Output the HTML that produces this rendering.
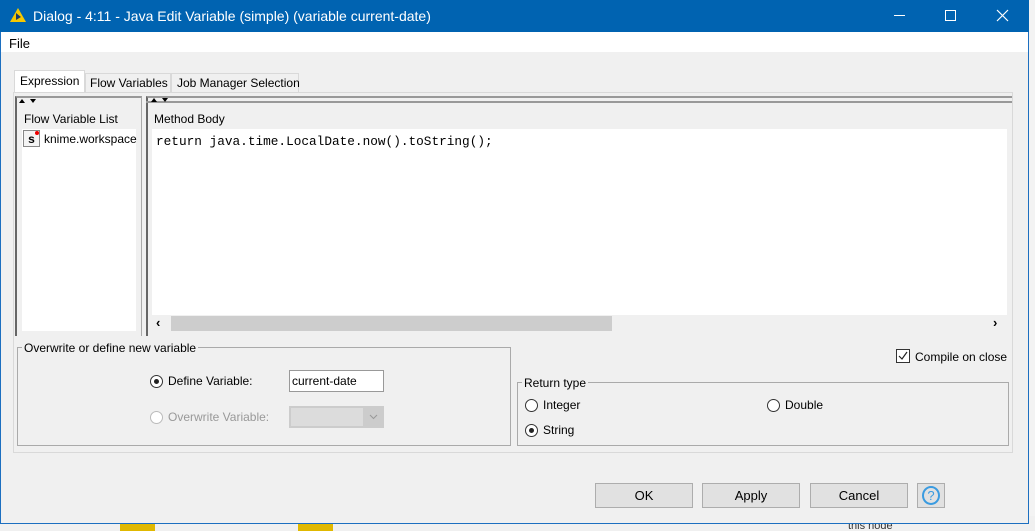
<!DOCTYPE html>
<html><head><style>
*{box-sizing:border-box;margin:0;padding:0}
body{width:1035px;height:531px;overflow:hidden;background:#fff;font-family:"Liberation Sans",sans-serif;font-size:12px;color:#000;position:relative}
.a{position:absolute}
.win{left:0;top:0;width:1029px;height:524px;border:1px solid #1c6fc0;background:#f0f0f0}
.title{left:0;top:0;width:1029px;height:32px;background:#0063b1;color:#fff;font-size:14px}
.btn{background:#e1e1e1;border:1px solid #adadad;text-align:center;line-height:23px;font-size:13px}
.rad{width:13px;height:13px;border:1px solid #333;border-radius:50%;background:#fff}
.dot{left:3px;top:3px;width:5px;height:5px;border-radius:50%;background:#222}
</style></head><body>
<div class="a" style="left:1028px;top:0;width:7px;height:531px;background:#f3f3f3"></div>
<div class="a" style="left:0;top:516px;width:1035px;height:15px;background:#f0f0f0"></div>
<div class="a" style="left:120px;top:523px;width:35px;height:8px;background:#e0b800"></div>
<div class="a" style="left:298px;top:523px;width:35px;height:8px;background:#e0b800"></div>
<div class="a" style="left:848px;top:520px;font-size:11px;color:#333">this node</div>
<div class="a win"></div>
<div class="a title">
 <svg class="a" style="left:9px;top:7px" width="18" height="16"><polygon points="9,1 17,15 1,15" fill="#f6c800"/><polygon points="7,6 12,10 7,13" fill="#1a3a6a"/></svg>
 <div class="a" style="left:33px;top:8px">Dialog - 4:11 - Java Edit Variable (simple) (variable current-date)</div>
 <div class="a" style="left:894px;top:15px;width:11px;height:1px;background:#fff"></div>
 <div class="a" style="left:945px;top:10px;width:11px;height:11px;border:1px solid #fff"></div>
 <svg class="a" style="left:996px;top:9px" width="13" height="13"><path d="M1 1L12 12M12 1L1 12" stroke="#fff" stroke-width="1.2"/></svg>
</div>
<div class="a" style="left:1px;top:32px;width:1027px;height:20px;background:#fff"></div>
<div class="a" style="left:9px;top:36px;font-size:13px">File</div>
<!-- tabs -->
<div class="a" style="left:14px;top:70px;width:71px;height:23px;background:#fff;border:1px solid #d9d9d9;border-bottom:none"></div>
<div class="a" style="left:20px;top:74px">Expression</div>
<div class="a" style="left:85px;top:73px;width:86px;height:20px;border:1px solid #d9d9d9;background:#f0f0f0"></div>
<div class="a" style="left:90px;top:76px">Flow Variables</div>
<div class="a" style="left:171px;top:73px;width:128px;height:20px;border:1px solid #d9d9d9;background:#f0f0f0"></div>
<div class="a" style="left:177px;top:76px">Job Manager Selection</div>
<div class="a" style="left:13px;top:92px;width:1000px;height:361px;border:1px solid #d9d9d9;background:#f0f0f0"></div>
<!-- left panel -->
<div class="a" style="left:15px;top:96px;width:127px;height:240px;border-left:2px solid #666;border-top:2px solid #999;border-right:1px solid #aaa"></div>
<svg class="a" style="left:18px;top:98px" width="24" height="6"><polygon points="1,5 4,1 7,5" fill="#000"/><polygon points="12,1 18,1 15,5" fill="#000"/></svg>
<div class="a" style="left:22px;top:129px;width:114px;height:202px;background:#fff"></div>
<div class="a" style="left:24px;top:112px">Flow Variable List</div>
<div class="a" style="left:23px;top:130px;width:17px;height:17px;border:1px solid #888;background:#f4f4f4;font-weight:bold;font-size:12px;text-align:center;line-height:16px">s</div>
<div class="a" style="left:35px;top:131px;width:4px;height:4px;border-radius:50%;background:#e00"></div>
<div class="a" style="left:44px;top:132px">knime.workspace</div>
<!-- right panel -->
<div class="a" style="left:146px;top:96px;width:866px;height:240px;border-left:2px solid #666;border-top:2px solid #999"></div>
<div class="a" style="left:146px;top:101px;width:866px;height:2px;background:#999"></div>
<svg class="a" style="left:150px;top:97px" width="24" height="6"><polygon points="1,5 4,1 7,5" fill="#000"/><polygon points="12,1 18,1 15,5" fill="#000"/></svg>
<div class="a" style="left:154px;top:112px">Method Body</div>
<div class="a" style="left:152px;top:129px;width:855px;height:203px;background:#fff"></div>
<div class="a" style="left:156px;top:134px;font-family:'Liberation Mono',monospace;font-size:12.75px">return java.time.LocalDate.now().toString();</div>
<div class="a" style="left:152px;top:315px;width:855px;height:17px;background:#f0f0f0"></div>
<div class="a" style="left:171px;top:316px;width:441px;height:15px;background:#cdcdcd"></div>
<div class="a" style="left:156px;top:315px;font-size:13px;font-weight:bold">‹</div>
<div class="a" style="left:993px;top:315px;font-size:13px;font-weight:bold">›</div>
<!-- overwrite box -->
<div class="a" style="left:17px;top:347px;width:494px;height:99px;border:1px solid #aaa"></div>
<div class="a" style="left:22px;top:341px;background:#f0f0f0;padding:0 2px">Overwrite or define new variable</div>
<div class="a rad" style="left:150px;top:375px"><div class="a dot"></div></div>
<div class="a" style="left:168px;top:374px">Define Variable:</div>
<div class="a" style="left:289px;top:370px;width:95px;height:22px;border:1px solid #999;background:#fff;padding:3px 2px">current-date</div>
<div class="a rad" style="left:150px;top:411px;border-color:#bbb"></div>
<div class="a" style="left:168px;top:410px;color:#999">Overwrite Variable:</div>
<div class="a" style="left:289px;top:406px;width:95px;height:22px;border:1px solid #ccc;background:#ccc"></div>
<div class="a" style="left:291px;top:408px;width:72px;height:18px;background:#dcdcdc"></div>
<svg class="a" style="left:369px;top:414px" width="9" height="6"><path d="M1 1L4.5 4.5L8 1" stroke="#999" fill="none"/></svg>
<!-- compile -->
<div class="a" style="left:896px;top:349px;width:14px;height:14px;border:1px solid #333;background:#fff"></div>
<svg class="a" style="left:897px;top:350px" width="12" height="12"><path d="M2 6L5 9L10 2" stroke="#222" fill="none" stroke-width="1.2"/></svg>
<div class="a" style="left:915px;top:350px">Compile on close</div>
<!-- return type -->
<div class="a" style="left:517px;top:382px;width:492px;height:64px;border:1px solid #aaa"></div>
<div class="a" style="left:522px;top:376px;background:#f0f0f0;padding:0 2px">Return type</div>
<div class="a rad" style="left:525px;top:399px"></div>
<div class="a" style="left:543px;top:398px">Integer</div>
<div class="a rad" style="left:767px;top:399px"></div>
<div class="a" style="left:785px;top:398px">Double</div>
<div class="a rad" style="left:525px;top:424px"><div class="a dot"></div></div>
<div class="a" style="left:543px;top:423px">String</div>
<!-- buttons -->
<div class="a btn" style="left:595px;top:483px;width:98px;height:25px">OK</div>
<div class="a btn" style="left:702px;top:483px;width:98px;height:25px">Apply</div>
<div class="a btn" style="left:810px;top:483px;width:98px;height:25px">Cancel</div>
<div class="a btn" style="left:917px;top:483px;width:28px;height:25px"></div>
<div class="a" style="left:922px;top:486px;width:18px;height:19px;border:2px solid #3a9be0;border-radius:50%;color:#3a9be0;text-align:center;font-size:13px;line-height:15px">?</div>
</body></html>
